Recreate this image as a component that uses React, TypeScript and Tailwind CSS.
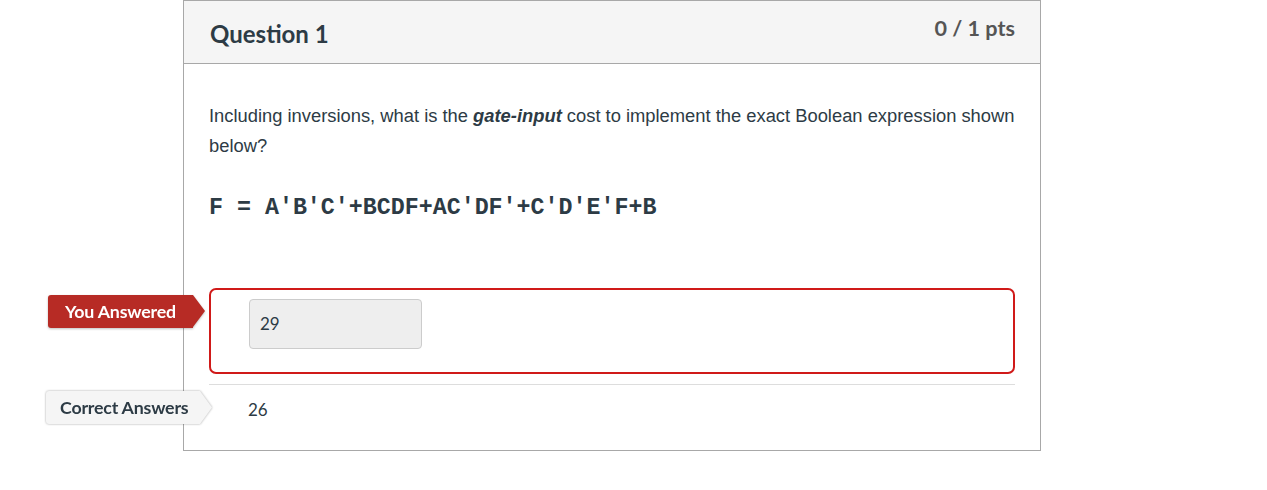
import React from 'react';

const lato = "font-['Lato','Noto_Sans',sans-serif]";

const YouAnsweredTag: React.FC = () => (
  <div className="absolute left-[-163px] top-[5px] flex h-[33px] drop-shadow-[0_1px_1px_rgba(0,0,0,0.25)]">
    <div className={`flex h-full w-[145px] items-center rounded-l-[3px] bg-[#b72b25] pl-[17px] text-[17.8px] font-bold tracking-[-0.2px] text-white ${lato}`}>
      You Answered
    </div>
    <div className="h-0 w-0 border-y-[16.5px] border-l-[12px] border-y-transparent border-l-[#b72b25]" />
  </div>
);

const CorrectTag: React.FC = () => (
  <div className="absolute left-[-163px] top-[6px] drop-shadow-[0_0_1px_rgba(0,0,0,0.35)]">
    <div
      className={`flex h-[33px] w-[166px] items-center rounded-l-[3px] bg-[#f5f5f5] pl-[14px] text-[17.8px] font-bold tracking-[-0.2px] text-[#2d3b45] ${lato} [clip-path:polygon(0_0,154px_0,166px_50%,154px_100%,0_100%)]`}
    >
      Correct Answers
    </div>
  </div>
);

export default function App() {
  return (
    <div className="min-h-[490px] w-[1267px] bg-white">
      <div className="ml-[183px] h-[451px] w-[858px] border border-[#a8a8a8]">
        <div className="flex h-[63px] items-start justify-between border-b border-[#a8a8a8] bg-[#f5f5f5] pl-[26px] pr-[25px]">
          <h2 className={`mt-[18px] text-[24px] font-bold leading-[30px] text-[#2d3b45] ${lato}`}>Question 1</h2>
          <div className={`mt-[12px] text-[21.6px] font-bold leading-[30px] text-[#555555] ${lato}`}>0 / 1 pts</div>
        </div>

        <div className="px-[25px] pt-[37px]">
          <p className="font-['Liberation_Sans',Arial,sans-serif] text-[18.35px] leading-[30px] text-[#2d3b45]">
            Including inversions, what is the <strong className="italic">gate-input</strong> cost to implement the exact
            Boolean expression shown below?
          </p>
          <p className="mt-[32px] font-['Liberation_Mono','Courier_New',monospace] text-[23.3px] font-bold leading-[30px] text-[#2d3b45]">
            F = A'B'C'+BCDF+AC'DF'+C'D'E'F+B
          </p>

          <div className="relative mt-[65px] h-[86px] rounded-[7px] border-2 border-[#d01a19] pl-[38px] pt-[9px]">
            <YouAnsweredTag />
            <div className={`flex h-[50px] w-[173px] items-center rounded-[4px] border border-[#cccccc] bg-[#eeeeee] pl-[10px] text-[17px] text-[#2d3b45] ${lato}`}>
              29
            </div>
          </div>

          <div className="mt-[10px] border-t border-[#dddddd]" />

          <div className="relative h-[50px]">
            <CorrectTag />
            <div className={`pl-[39px] pt-[13px] text-[17px] leading-[24px] text-[#2d3b45] ${lato}`}>26</div>
          </div>
        </div>
      </div>
    </div>
  );
}
